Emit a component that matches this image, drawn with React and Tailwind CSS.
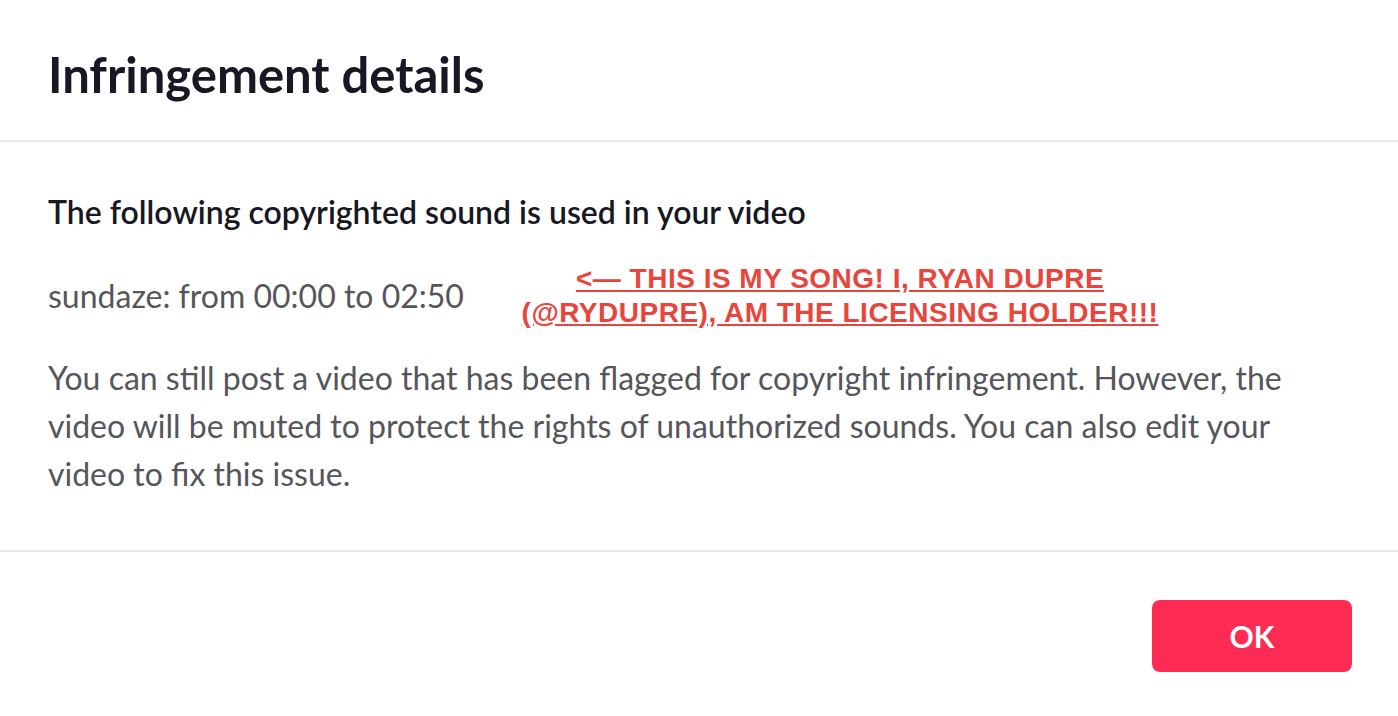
import React from "react";

export default function App() {
  return (
    <div className="w-[1398px] h-[716px] bg-white flex flex-col overflow-hidden" style={{ fontFamily: "Lato, 'Open Sans', sans-serif" }}>
      <div className="h-[142px] px-[48px] flex items-center border-b-2 border-[#e8e8e8]">
        <h1 className="text-[49px] font-bold text-[#161823] leading-none mt-[8px]">Infringement details</h1>
      </div>
      <div className="px-[48px] pt-[50px] h-[410px] border-b-2 border-[#e8e8e8]">
        <div className="text-[32px] font-semibold text-[#161823] leading-[40px]">The following copyrighted sound is used in your video</div>
        <div className="flex items-center mt-[32px] h-[64px]">
          <div className="text-[32px] text-[#55565c] leading-[40px] w-[472px]">sundaze: from 00:00 to 02:50</div>
          <div className="text-center text-[28px] font-bold text-[#e8453c] underline tracking-[0.5px] leading-[34px] w-[640px]" style={{ fontFamily: "'Liberation Sans', Arial, sans-serif" }}>
            <div>&lt;— THIS IS MY SONG! I, RYAN DUPRE</div>
            <div>(@RYDUPRE), AM THE LICENSING HOLDER!!!</div>
          </div>
        </div>
        <p className="mt-[26px] text-[32px] text-[#55565c] leading-[48px]">
          You can still post a video that has been flagged for copyright infringement. However, the<br />
          video will be muted to protect the rights of unauthorized sounds. You can also edit your<br />
          video to fix this issue.
        </p>
      </div>
      <div className="flex justify-end px-[46px] pt-[48px]">
        <button className="w-[200px] h-[72px] rounded-[8px] bg-[#fe2c55] text-white text-[30px] font-bold">OK</button>
      </div>
    </div>
  );
}
